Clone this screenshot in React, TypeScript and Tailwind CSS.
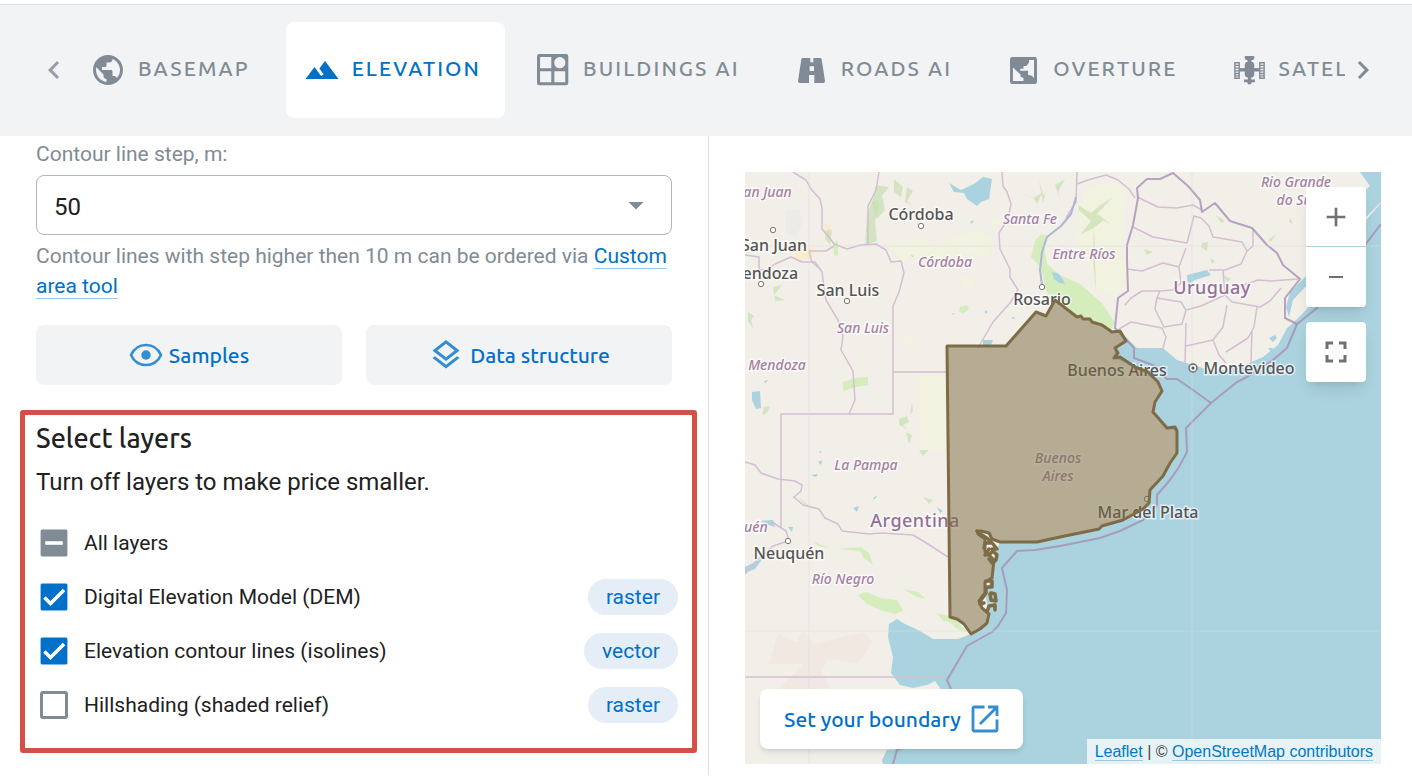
import React, { useEffect, useRef, useState } from 'react';
import {
    MdAdd,
    MdArrowDropDown,
    MdCheck,
    MdChevronLeft,
    MdChevronRight,
    MdFullscreen,
    MdOutlineLayers,
    MdPublic,
    MdRemove,
    MdTerrain,
} from 'react-icons/md';

interface Tab {
    name: string;
    icon: React.ReactNode;
}

interface Layer {
    id: string;
    name: string;
    kind: 'raster' | 'vector';
}

interface MapLabel {
    text: string;
    x: number;
    y: number;
    size: number;
    type: 'city' | 'province' | 'country';
}

const BuildingsIcon: React.FC = () => (
    <svg className="size-8 mx-[2px]" viewBox="0 0 94 94" fill="currentColor" fillRule="evenodd">
        <path d="M7 0H85Q92 0 92 7V85Q92 92 85 92H7Q0 92 0 85V7Q0 0 7 0ZM9 9V42H42V9ZM9 51V83H42V51ZM51 51V83H83V51ZM67 9A16.500 16.500 0 1 0 67 42A16.500 16.500 0 1 0 67 9Z" />
    </svg>
);

const RoadIcon: React.FC = () => (
    <svg className="w-[27px] h-[25px] mx-[4px]" viewBox="0 0 81 75" fill="currentColor" fillRule="evenodd">
        <path d="M15 0H66Q70 0 71 4L81 69Q81 75 76 75H5Q0 75 0 69L10 4Q11 0 15 0ZM37 0V13H46V0ZM35 25V39H48V25ZM33 51V75H49V51Z" />
    </svg>
);

const OvertureIcon: React.FC = () => (
    <svg className="size-[27px] mx-[4px]" viewBox="0 0 82 82" fill="currentColor" fillRule="evenodd">
        <path d="M7 0H75Q82 0 82 7V75Q82 82 75 82H7Q0 82 0 75V7Q0 0 7 0ZM58 9V17L50 27H41V36H31V42H55V55L65 56L73 64V9ZM9 32V73H41V64L32 60V53Z" />
    </svg>
);

const SatelliteIcon: React.FC = () => (
    <svg className="w-[31px] h-[29px] mx-[2px]" viewBox="0 0 92 86" fill="currentColor">
        <path d="M33 0H59L61 5L57 12H52V18H56L60 24V57L56 63H51V70H62V78H53L50 84H42L39 78H30V70H41V63H36L32 57V24L36 18H40V12H35L31 5Z" />
        <path d="M16 36H76V46H16Z" />
        <path d="M2.500 20H15.500V66H2.500ZM2.500 28H15.500M2.500 36H15.500M2.500 44H15.500M2.500 52H15.500M2.500 59H15.500" fill="none" stroke="currentColor" strokeWidth="4" />
        <path d="M76.500 20H89.500V66H76.500ZM76.500 28H89.500M76.500 36H89.500M76.500 44H89.500M76.500 52H89.500M76.500 59H89.500" fill="none" stroke="currentColor" strokeWidth="4" />
    </svg>
);

const EyeIcon: React.FC = () => (
    <svg className="w-[34px] h-6 text-[#338dd2]" viewBox="0 0 34 24" fill="none">
        <path d="M2 12C5 5.500 10.500 2 17 2S29 5.500 32 12C29 18.500 23.500 22 17 22S5 18.500 2 12Z" stroke="currentColor" strokeWidth="2.600" />
        <circle cx="17" cy="12" r="4.700" fill="currentColor" />
    </svg>
);

const OpenIcon: React.FC = () => (
    <svg className="size-7 text-[#338dd2]" viewBox="0 0 28 28" fill="none" stroke="currentColor" strokeWidth="2.800">
        <path d="M13.500 2H3.500Q2 2 2 3.500V24.500Q2 26 3.500 26H24.500Q26 26 26 24.500V14.500" />
        <path d="M17 2H26V11M26 2L9 19" />
    </svg>
);

const tabs: Tab[] = [
    { name: 'BASEMAP', icon: <MdPublic className="size-9" /> },
    { name: 'ELEVATION', icon: <MdTerrain className="size-9" /> },
    { name: 'BUILDINGS AI', icon: <BuildingsIcon /> },
    { name: 'ROADS AI', icon: <RoadIcon /> },
    { name: 'OVERTURE', icon: <OvertureIcon /> },
    { name: 'SATELLITE', icon: <SatelliteIcon /> },
];

const layers: Layer[] = [
    { id: 'dem', name: 'Digital Elevation Model (DEM)', kind: 'raster' },
    { id: 'isolines', name: 'Elevation contour lines (isolines)', kind: 'vector' },
    { id: 'hillshade', name: 'Hillshading (shaded relief)', kind: 'raster' },
];

const labels: MapLabel[] = [
    { text: 'San Juan', x: 19, y: 25, size: 14, type: 'province' },
    { text: 'Córdoba', x: 176, y: 48, size: 16, type: 'city' },
    { text: 'Santa Fe', x: 285, y: 52, size: 14, type: 'province' },
    { text: 'Entre Ríos', x: 339, y: 87, size: 14, type: 'province' },
    { text: 'Rio Grande', x: 551, y: 15, size: 14, type: 'province' },
    { text: 'do Sul', x: 551, y: 33, size: 14, type: 'province' },
    { text: 'San Juan', x: 29, y: 79, size: 16, type: 'city' },
    { text: 'Mendoza', x: 18, y: 107, size: 16, type: 'city' },
    { text: 'Córdoba', x: 200, y: 95, size: 14, type: 'province' },
    { text: 'San Luis', x: 103, y: 124, size: 16, type: 'city' },
    { text: 'Rosario', x: 297, y: 133, size: 16, type: 'city' },
    { text: 'San Luis', x: 118, y: 161, size: 14, type: 'province' },
    { text: 'Mendoza', x: 32, y: 198, size: 14, type: 'province' },
    { text: 'Uruguay', x: 467, y: 122, size: 18, type: 'country' },
    { text: 'Buenos Aires', x: 372, y: 204, size: 16, type: 'city' },
    { text: 'Montevideo', x: 504, y: 202, size: 16, type: 'city' },
    { text: 'La Pampa', x: 121, y: 298, size: 14, type: 'province' },
    { text: 'Buenos', x: 313, y: 291, size: 14, type: 'province' },
    { text: 'Aires', x: 313, y: 309, size: 14, type: 'province' },
    { text: 'Argentina', x: 170, y: 355, size: 18, type: 'country' },
    { text: 'Mar del Plata', x: 403, y: 346, size: 16, type: 'city' },
    { text: 'Neuquén', x: -6, y: 360, size: 14, type: 'province' },
    { text: 'Neuquén', x: 44, y: 387, size: 16, type: 'city' },
    { text: 'Río Negro', x: 98, y: 412, size: 14, type: 'province' },
];

const labelStyles = {
    city: 'fill-[#555] font-medium',
    province: 'fill-[#a481a2] font-medium italic',
    country: 'fill-[#946f97] font-medium tracking-wide',
};

const cityDots = [[28, 58], [176, 54], [16, 112], [102, 129], [297, 115], [43, 369], [402, 327]];

const lakes = [
    'M204 11L216 18L229 12L238 5L247 7L244 27L236 30L232 34L222 27L219 21L209 20Z',
    'M7 220L15 219L16 236L11 237L7 228Z',
    'M108 336L114 334L112 340Z',
    'M0 395L18 386L10 397L0 401Z',
    'M15 349L28 348L30 355L21 352ZM43 355L48 355L47 360Z',
    'M238 168L248 168L246 173L238 173Z',
    'M442 103L462 98L466 103L450 108L443 113Z',
    'M307 100L314 102L318 108L320 112L314 111L309 107Z',
    'M524 166L530 163L532 166L528 170ZM523 176L528 176L527 181Z',
    'M207 141L210 142L208 143ZM66 303L73 302L71 305ZM240 138L243 140L240 142ZM267 145L271 146L267 147ZM75 279L77 280L74 281ZM73 290L77 288L76 293Z',
    'M192 335L198 339L195 341ZM129 325L133 324L128 328ZM166 83L169 84L167 85ZM19 209L24 208L20 211ZM225 50L229 48L227 52Z',
];

const greens = [
    'M98 210L110 206L123 205L123 213L111 215L98 219Z',
    'M113 423L121 420L136 426L152 428L158 439L150 442L135 438L122 432Z',
    'M192 441L203 444L212 449L221 460L212 457L205 450L198 449Z',
    'M88 70L93 69L93 84L89 83Z',
    'M215 135L222 133L224 137L218 142L214 139Z',
    'M54 325L68 337L59 333ZM68 369L84 376L73 374ZM92 377L116 375L124 381L128 393L119 386L115 379Z',
    'M296 62L304 64L299 73L302 92L315 103L335 112L357 131L370 151L365 159L352 151L334 145L313 130L302 121L296 96L286 85L290 69Z',
    'M158 417L173 420L181 427L172 425Z',
];

const forests = [
    'M127 29L133 28L134 35L130 50L132 69L120 73L122 43Z',
    'M131 13L144 15L137 24L140 38L132 47L127 32ZM149 7L158 15L156 25L149 20ZM162 15L168 19L162 29L167 33L160 30Z',
    'M19 235L25 234L22 241L17 243Z',
    'M28 115L37 113L29 123L40 128L30 129ZM3 140L9 144L6 148L8 156L3 149Z',
    'M154 247L162 244L164 250L158 253L162 257L154 253ZM161 260L167 263L164 272ZM174 278L184 278L178 284ZM165 242L167 230L168 239Z',
    'M275 22L288 26L297 21L292 32L289 26ZM294 9L299 24L302 15L298 31ZM310 13L320 7L313 20L316 31Z',
    'M333 33L346 41L354 34L368 25L352 42L358 49L347 57L336 62L346 49L334 38ZM353 42L365 52L355 47ZM349 55L351 120L348 88Z',
    'M457 71L463 70L462 79L456 75ZM465 86L470 89L467 92ZM471 43L480 49L476 51ZM478 103L486 107L482 110ZM545 45L548 52L544 50ZM523 68L531 62L526 70ZM399 77L408 80L402 83Z',
    'M178 325L188 328L184 332ZM81 58L87 58L85 73L80 67Z',
];

const meadows = [
    'M174 204L202 203V280H175Z',
    'M142 66L158 72L172 64L186 76L213 64L238 59L248 68L242 84L220 82L202 95L178 84L157 89L146 78Z',
    'M341 16L370 10L382 18L376 76L382 100L372 126L352 117L347 96L330 70L336 40Z',
    'M158 163L172 167L168 177L160 172ZM229 173L239 163L232 176Z',
    'M244 45L259 48L249 58ZM215 105L230 102L226 121L219 112Z',
];

// Province and department limits
const borders = [
    'M48 0L61 8L66 17L75 27L77 36V57L84 65L89 72L102 77L116 73L131 72L141 78L146 90L156 89L159 101L154 120L148 134V242H36V288V356',
    'M134 0L131 18L123 34V72',
    'M0 83L14 85V98H22L30 92L46 85L57 90L70 90L77 100L81 128L93 148L98 164L96 178L108 199L110 228L104 242',
    'M64 79H81L89 74M64 79L67 90L75 97',
    'M257 0L258 14L262 20L266 32L263 47L254 61L255 77L265 97V105L273 118L265 131L248 150L233 176',
    'M148 200H203',
    'M0 290L10 293L16 301L33 307L50 309L57 313L56 319L49 325L58 333L74 337L80 346L93 352L97 359L124 362L137 361L168 363L183 372L203 385',
    'M44 368L41 359L27 350M43 369L28 374L10 390L0 402',
    'M0 505H202',
    'M332 12L343 8L361 3L373 8L384 17L390 26M332 0L331 30L321 46',
    'M392 25L413 35L432 36L448 33L457 38M388 55L408 65L442 71L449 44L456 46L464 54L468 65L497 70L502 79L508 74V57',
    'M382 97L397 99L418 91L434 95L441 76M502 79L496 92L480 98L464 98M434 95L436 111L428 118L415 119L397 119L386 126L380 133',
    'M478 98L480 123L487 130L515 135L525 129L536 116M485 118L513 108L526 109L553 107M480 123L456 134L441 138L436 130L412 126L415 119',
    'M412 126L410 137L419 155L437 152L441 138M374 157L386 150L417 156L421 165L418 176M441 151L440 192M441 174L468 168L478 155L482 133M468 168L474 183L481 191M481 180L503 166L509 155L512 135M507 158L506 191L503 195',
];

// National and maritime limits
const nationalBorders = [
    'M636 52L572 136L552 152L540 146V126L555 107L538 93L532 81L522 73L507 56L485 49L470 31L457 40L455 28L443 14L428 1L415 7L402 7L392 16L393 26L388 53L382 73V88L383 119L373 126L370 156L389 176V186L410 194L422 207H432L448 218L466 231',
    'M552 152L542 176L528 188L502 205L492 210L466 231L441 256L442 280L434 295L425 308L412 323V333L398 348L375 359L355 366L315 374L290 378L272 379L257 396L262 418L261 441L253 454L247 460L222 474L202 508L206 517',
    'M162 574L152 578L148 592',
];

const sea =
    'M636 31L621 48L590 95L561 138L548 151L542 156L533 173L518 185L500 193L470 200L448 193L432 188L418 176H392L382 166L375 159L381 169L370 176L369 186L390 195L413 210L417 219L410 230L408 240L422 256L432 259V281L418 304L405 318L404 331L378 348L354 357L315 365L292 370H255L248 388L247 406L240 421L244 442L242 451L226 462L213 467H188L175 459L158 451L152 447L144 452L143 465L148 485L146 501L155 513L168 516L182 513L190 509L195 516L206 540L170 565L155 577L142 578L137 588L138 592H636Z';

const boundary =
    'M202 174H261L291 140L301 144L310 128L332 145L336 144L338 147H345L347 150L357 153L367 160L375 159L381 169L370 176L373 181L369 186L375 185L390 195L403 200L413 210L417 219L410 230L408 240L422 256L430 255L432 259V281L425 291L418 304L405 318L404 331L398 337L378 348L357 354L354 357L315 365L292 370H255L247 367L244 361L236 359L232 359L233 362L240 367V380L245 384L249 388L247 406L240 410V421L234 429L237 436L244 442L242 451L235 457L226 462L219 452L212 447L205 445Z';

const BoundaryMap: React.FC = () => (
    <svg
        className="absolute inset-0 size-full font-['Noto_Sans','Open_Sans',sans-serif]"
        viewBox="0 0 636 592"
        preserveAspectRatio="xMidYMid slice"
        role="img"
        aria-label="Map of the selected area"
    >
        <rect width="636" height="592" fill="#f2efe9" />
        <path d="M33 462L52 470L58 459L68 472L118 460L128 470L113 491L82 487L76 500L86 516L30 520L51 500L58 492L24 492Z" fill="#f1e8e1" />
        <path d="M40 40L54 37L58 50L51 65L41 61Z" fill="#edebe5" />
        <path d="M49 80L56 69L60 76L71 76L66 87L50 86ZM80 52L86 54L84 70L79 61Z" fill="#faebcb" />
        {meadows.map((d) => <path key={d} d={d} fill="#f0f3d9" opacity="0.6" />)}
        {greens.map((d) => <path key={d} d={d} fill="#d5edbd" />)}
        {forests.map((d) => <path key={d} d={d} fill="#c8dfb0" opacity="0.7" />)}
        <path d={sea} fill="#aad3df" />
        <path d="M615 0H636V30L621 45L618 20L625 14Z M562 103L545 120L541 135L544 145L548 128L562 113Z" fill="#aad3df" />
        {lakes.map((d) => <path key={d} d={d} fill="#aad3df" />)}
        <g fill="none" strokeLinejoin="round">
            {borders.map((d) => <path key={d} d={d} stroke="#d3bfd1" strokeWidth="1.500" />)}
            {nationalBorders.map((d) => <path key={d} d={d} stroke="#a78fb5" strokeWidth="2" opacity="0.8" />)}
            <path d="M331 25L326 42L316 54L302 65L297 80L295 98L297 113" stroke="#adb6d2" strokeWidth="2" />
            <path d="M64 0V592M447 0V592M0 74H636M0 459H636" stroke="#d7dddf" opacity="0.5" />
        </g>
        {cityDots.map(([cx, cy]) => (
            <circle key={`${cx}-${cy}`} cx={cx} cy={cy} r="2.700" fill="#fff" stroke="#7b7975" />
        ))}
        <circle cx="448" cy="196" r="4" fill="#eee" stroke="#666" strokeWidth="1.300" />
        <circle cx="448" cy="196" r="1.500" fill="#555" />
        {labels.map((l) => (
            <text
                key={`${l.text}-${l.x}-${l.y}`}
                x={l.x}
                y={l.y}
                fontSize={l.size}
                textAnchor="middle"
                className={labelStyles[l.type]}
                stroke="#fff"
                strokeOpacity="0.65"
                strokeWidth="3"
                paintOrder="stroke"
            >
                {l.text}
            </text>
        ))}
        <path d={boundary} fill="#7a6a3e" fillOpacity="0.5" stroke="#7d6c46" strokeWidth="3" strokeLinejoin="round" />
        <g fill="none" stroke="#7d6c46" strokeWidth="3.500" strokeLinejoin="round" strokeLinecap="round">
            <path d="M232 359L237 363L243 367L247 371L240 371L239 376M248 372L252 377L247 377M244 377L240 383L245 382L248 379L252 383L251 388L247 391L244 387" />
            <path d="M241 409H247V415H241V421L236 428L235 432L239 431M246 421L250 422L251 429L246 428L245 422M242 440L244 434L250 433V438" />
        </g>
    </svg>
);

const LayerCheckbox: React.FC<{
    label: string;
    checked: boolean;
    indeterminate?: boolean;
    onChange: () => void;
}> = ({ label, checked, indeterminate = false, onChange }) => {
    const ref = useRef<HTMLInputElement>(null);

    useEffect(() => {
        if (ref.current) ref.current.indeterminate = indeterminate;
    }, [indeterminate]);

    return (
        <label className="flex items-center gap-3 cursor-pointer">
            <span className="relative flex size-9 items-center justify-center">
                <input
                    ref={ref}
                    type="checkbox"
                    checked={checked}
                    onChange={onChange}
                    className="size-7 cursor-pointer appearance-none rounded-[3px] border-3 border-[#808b95] bg-white checked:border-[#0070c9] checked:bg-[#0070c9] indeterminate:border-[#808b95] indeterminate:bg-[#808b95]"
                />
                {indeterminate && <MdRemove className="absolute size-7 text-white pointer-events-none" strokeWidth="1" stroke="currentColor" />}
                {checked && !indeterminate && <MdCheck className="absolute size-7 text-white pointer-events-none" strokeWidth="1" stroke="currentColor" />}
            </span>
            {label}
        </label>
    );
};

const App: React.FC = () => {
    const [activeTab, setActiveTab] = useState('ELEVATION');
    const [step, setStep] = useState('50');
    const [selected, setSelected] = useState<string[]>(['dem', 'isolines']);

    const allSelected = selected.length === layers.length;

    const toggleLayer = (id: string) => {
        setSelected((prev) => (prev.includes(id) ? prev.filter((s) => s !== id) : [...prev, id]));
    };

    const toggleAll = () => {
        setSelected(allSelected ? [] : layers.map((l) => l.id));
    };

    return (
        <div className="bg-white pt-1 pb-1 font-['Roboto',sans-serif] text-[21px] leading-[30px] text-[#212121]">
            <header className="flex items-center border-t border-[#dcdfe2] bg-[#f2f3f5] pt-[17px] pb-[18px] pl-9 pr-[31px] text-[#808b95]">
                <button type="button" aria-label="Previous tabs" className="shrink-0 opacity-80">
                    <MdChevronLeft className="size-9" />
                </button>
                <nav className="flex min-w-0 flex-1 gap-3 overflow-hidden">
                    {tabs.map((tab) => (
                        <button
                            key={tab.name}
                            type="button"
                            onClick={() => setActiveTab(tab.name)}
                            className={`flex h-24 shrink-0 items-center gap-3 rounded-lg pl-[18px] pr-6 font-['Ubuntu','Noto_Sans',sans-serif] font-medium tracking-widest ${
                                activeTab === tab.name ? 'bg-white text-[#0070c9]' : ''
                            }`}
                        >
                            {tab.icon}
                            <span className="pb-1">{tab.name}</span>
                        </button>
                    ))}
                </nav>
                <button type="button" aria-label="Next tabs" className="shrink-0">
                    <MdChevronRight className="size-9" />
                </button>
            </header>

            <main className="grid grid-cols-[709fr_703fr]">
                <div className="border-r border-[#dcdfe2] px-9 pt-[3px] pb-[22px]">
                    <label htmlFor="step" className="block text-[#808b95]">Contour line step, m:</label>
                    <div className="relative mt-[6px]">
                        <select
                            id="step"
                            value={step}
                            onChange={(e) => setStep(e.target.value)}
                            className="h-[60px] w-full appearance-none rounded-lg border border-[#b0b6bb] bg-white px-[17px] pt-1 text-2xl"
                        >
                            <option>10</option>
                            <option>25</option>
                            <option>50</option>
                            <option>100</option>
                        </select>
                        <MdArrowDropDown className="absolute right-[18px] top-3 size-9 text-[#808b95] pointer-events-none" />
                    </div>
                    <p className="mt-[6px] text-[#808b95]">
                        Contour lines with step higher then 10 m can be ordered via{' '}
                        <a href="#custom-area" className="border-b border-[#99c9ea] text-[#0070c9]">Custom area tool</a>
                    </p>

                    <div className="mt-6 grid grid-cols-2 gap-6 font-['Ubuntu','Noto_Sans',sans-serif] font-medium text-[#0070c9]">
                        <button type="button" className="flex h-[60px] items-center justify-center gap-[6px] rounded-lg bg-[#f2f3f5]">
                            <EyeIcon />
                            Samples
                        </button>
                        <button type="button" className="flex h-[60px] items-center justify-center gap-[6px] rounded-lg bg-[#f2f3f5]">
                            <MdOutlineLayers className="size-9 text-[#338dd2]" />
                            Data structure
                        </button>
                    </div>

                    <section className="-ml-4 -mr-[25px] mt-[25px] rounded-[3px] border-5 border-[#d25045] pt-[5px] pr-[14px] pb-4 pl-[11px]">
                        <h2 className="font-['Ubuntu','Noto_Sans',sans-serif] text-[27px] font-medium leading-9">Select layers</h2>
                        <p className="mt-2 text-2xl leading-9">Turn off layers to make price smaller.</p>
                        <ul className="mt-4">
                            <li className="flex h-[54px] items-center">
                                <LayerCheckbox
                                    label="All layers"
                                    checked={allSelected}
                                    indeterminate={selected.length > 0 && !allSelected}
                                    onChange={toggleAll}
                                />
                            </li>
                            {layers.map((layer) => (
                                <li key={layer.id} className="flex h-[54px] items-center justify-between">
                                    <LayerCheckbox
                                        label={layer.name}
                                        checked={selected.includes(layer.id)}
                                        onChange={() => toggleLayer(layer.id)}
                                    />
                                    <span className="rounded-full bg-[#e5edf7] px-[18px] py-[3px] text-[#0070c9]">{layer.kind}</span>
                                </li>
                            ))}
                        </ul>
                    </section>
                </div>

                <div className="flex pt-9 pr-[31px] pb-[11px] pl-9">
                    <div className="relative flex-1 overflow-hidden">
                        <BoundaryMap />

                        <div className="absolute top-[15px] right-[15px] flex flex-col gap-[15px] text-[#707070]">
                            <div className="flex flex-col rounded-sm bg-white shadow-lg">
                                <button type="button" aria-label="Zoom in" className="flex size-[60px] items-center justify-center border-b border-[#aad3df]">
                                    <MdAdd className="size-8" />
                                </button>
                                <button type="button" aria-label="Zoom out" className="flex size-[60px] items-center justify-center">
                                    <MdRemove className="size-6" />
                                </button>
                            </div>
                            <button type="button" aria-label="Full screen" className="flex size-[60px] items-center justify-center rounded-sm bg-white shadow-lg">
                                <MdFullscreen className="size-9" />
                            </button>
                        </div>

                        <button
                            type="button"
                            className="absolute bottom-[15px] left-[15px] flex h-[60px] items-center gap-[10px] rounded-lg bg-white px-6 font-['Ubuntu','Noto_Sans',sans-serif] font-medium text-[#0070c9] shadow-md"
                        >
                            Set your boundary
                            <OpenIcon />
                        </button>

                        <div className="absolute right-0 bottom-0 bg-white/70 px-2 font-['Liberation_Sans',sans-serif] text-base leading-[25px] text-[#444]">
                            <a href="#leaflet" className="border-b border-[#99c9ea] text-[#0078c8]">Leaflet</a>
                            {' | © '}
                            <a href="#osm" className="border-b border-[#99c9ea] text-[#0078c8]">OpenStreetMap contributors</a>
                        </div>
                    </div>
                </div>
            </main>
        </div>
    );
};

export default App;
